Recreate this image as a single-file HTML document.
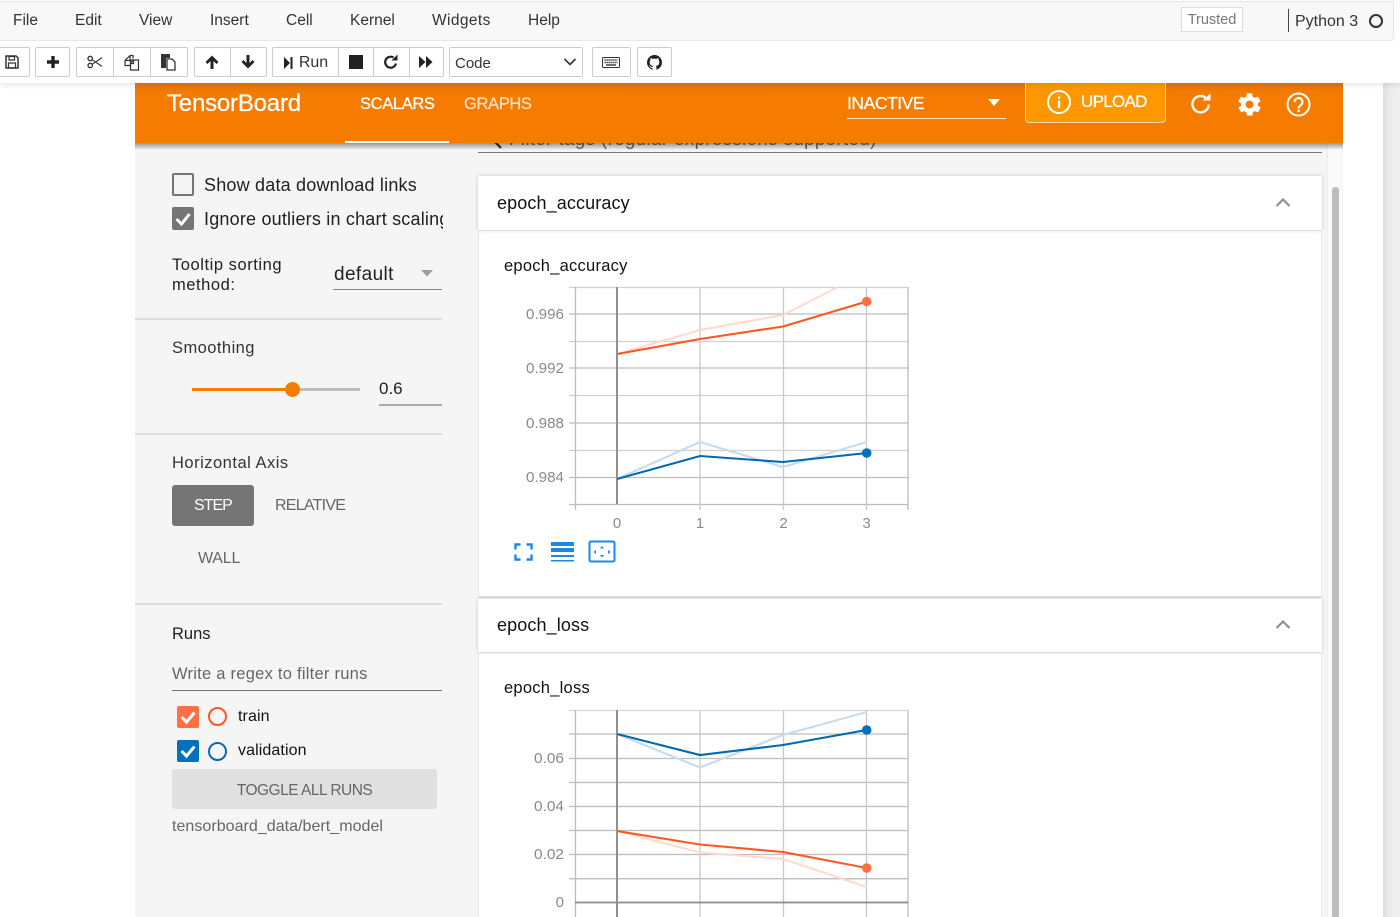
<!DOCTYPE html>
<html><head><meta charset="utf-8"><title>TensorBoard</title>
<style>
html,body{margin:0;padding:0;width:1400px;height:917px;overflow:hidden;background:#fff}
body{position:relative;font-family:"Liberation Sans",sans-serif;color:#212121}
#w{position:absolute;left:0;top:0;width:1400px;height:917px;overflow:hidden;filter:blur(.3px)}
.a{position:absolute;white-space:nowrap}
.m{top:12px;font-size:15.5px;line-height:18px;color:#333}
.b{position:absolute;top:47px;height:28px;background:#fff;border:1px solid #ccc;border-radius:2px;box-sizing:content-box;display:flex}
.b>div{height:28px;border-right:1px solid #ccc;display:flex;align-items:center;justify-content:center;box-sizing:content-box}
.b>div:last-child{border-right:0}
.s{font-size:16.5px;line-height:20px;color:#212121}
.g{color:#666}
.hr{position:absolute;left:135px;width:307px;height:1px;background:#ddd}
.panel{position:absolute;left:478px;width:844px;background:#fff;box-shadow:0 0 4px rgba(0,0,0,.18)}
.o{-webkit-text-stroke:.25px currentColor}
svg{display:block}
</style></head><body><div id="w">

<!-- right gutter -->
<div class="a" style="left:1383px;top:83px;width:17px;height:834px;background:linear-gradient(90deg,#dedede,#ececec 40%,#f0f0f0)"></div>

<!-- content bg -->
<div class="a" style="left:135px;top:83px;width:1208px;height:834px;background:#f5f5f5"></div>
<div class="a" style="left:1327px;top:143px;width:15px;height:774px;background:#fafafa;border-left:1px solid #eee;box-sizing:border-box"></div>
<div class="a" style="left:1332px;top:187px;width:7px;height:730px;background:#bdbdbd;border-radius:3px 3px 0 0"></div>

<!-- filter -->
<svg class="a" style="left:492px;top:138px" width="14" height="12"><path d="M3 4l6 6" stroke="#333" stroke-width="2.200"/></svg>
<div class="a g" style="left:509px;top:129px;font-size:18.5px;line-height:20px;letter-spacing:.47px">Filter tags (regular expressions supported)</div>
<div class="a" style="left:478px;top:152px;width:844px;height:1px;background:#777"></div>

<!-- orange header -->
<div class="a" style="left:135px;top:143px;width:1208px;height:7px;background:linear-gradient(rgba(0,0,0,.4),rgba(0,0,0,0))"></div>
<div class="a" style="left:135px;top:83px;width:1208px;height:60px;background:#f57c00"></div>
<div class="a" style="left:135px;top:83px;width:1208px;height:10px;background:linear-gradient(#e57310,#f57c00)"></div>
<div class="a o" style="left:167px;top:89px;font-size:24px;line-height:30px;color:#fff;letter-spacing:-.2px">TensorBoard</div>
<div class="a o" style="left:360px;top:95px;font-size:16.5px;line-height:18px;color:#fff;letter-spacing:-.35px">SCALARS</div>
<div class="a" style="left:345px;top:141px;width:104px;height:2px;background:#fff"></div>
<div class="a o" style="left:464px;top:95px;font-size:16.5px;line-height:18px;color:#fde0c2;letter-spacing:-.35px">GRAPHS</div>
<div class="a o" style="left:847px;top:93px;font-size:17.5px;line-height:20px;color:#fff;letter-spacing:-.45px">INACTIVE</div>
<div class="a" style="left:847px;top:118px;width:159px;height:1px;background:#ffe3c4"></div>
<svg class="a" style="left:987px;top:98px" width="14" height="9"><path d="M1 1h12L7 8z" fill="#fff"/></svg>
<div class="a" style="left:1025px;top:83px;width:141px;height:40px;box-sizing:border-box;background:#ff9800;border:1px solid #ffd9a8;border-top:0;border-radius:0 0 4px 4px"></div>
<svg class="a" style="left:1046px;top:89px" width="26" height="26" viewBox="0 0 26 26"><circle cx="13" cy="13" r="11" fill="none" stroke="#fff" stroke-width="2"/><rect x="12" y="11.5" width="2.2" height="7.5" fill="#fff"/><rect x="12" y="7.5" width="2.2" height="2.2" fill="#fff"/></svg>
<div class="a o" style="left:1081px;top:92px;font-size:17px;line-height:20px;color:#fff;letter-spacing:-.7px">UPLOAD</div>
<svg class="a" style="left:1187px;top:90px" width="28" height="28" viewBox="0 0 28 28"><path d="M21.8 14.5A8.2 8.2 0 1 1 18.5 7.6" fill="none" stroke="#fff" stroke-width="2.4"/><path d="M15.5 10.5h8v-7z" fill="#fff"/></svg>
<svg class="a" style="left:1236px;top:91px" width="27" height="27" viewBox="0 0 24 24"><path fill="#fff" d="M19.4 13a7.5 7.5 0 0 0 0-2l2.1-1.6a.5.5 0 0 0 .1-.6l-2-3.5a.5.5 0 0 0-.6-.2l-2.5 1a7.3 7.3 0 0 0-1.7-1l-.4-2.6a.5.5 0 0 0-.5-.4h-4a.5.5 0 0 0-.5.4l-.4 2.6a7.3 7.3 0 0 0-1.7 1l-2.5-1a.5.5 0 0 0-.6.2l-2 3.5a.5.5 0 0 0 .1.6L4.6 11a7.5 7.5 0 0 0 0 2l-2.1 1.6a.5.5 0 0 0-.1.6l2 3.5c.1.2.4.3.6.2l2.5-1c.5.4 1.1.7 1.7 1l.4 2.6c0 .2.2.4.5.4h4c.3 0 .5-.2.5-.4l.4-2.6a7.3 7.3 0 0 0 1.7-1l2.5 1c.2.1.5 0 .6-.2l2-3.5a.5.5 0 0 0-.1-.6zM12 15.5a3.5 3.5 0 1 1 0-7 3.5 3.5 0 0 1 0 7z"/></svg>
<svg class="a" style="left:1285px;top:91px" width="27" height="27" viewBox="0 0 27 27"><circle cx="13.5" cy="13.5" r="11" fill="none" stroke="#fff" stroke-width="2"/><path d="M9.6 11a3.9 3.9 0 1 1 6.3 3c-1.5 1.2-2.4 1.8-2.4 3.6" fill="none" stroke="#fff" stroke-width="2.2"/><rect x="12.4" y="18.8" width="2.2" height="2.2" fill="#fff"/></svg>

<!-- sidebar -->
<div class="a" style="left:172px;top:173px;width:22px;height:23px;box-sizing:border-box;border:2px solid #757575;border-radius:2px"></div>
<div class="a" style="left:204px;top:175px;font-size:18px;line-height:20px;letter-spacing:.2px">Show data download links</div>
<div class="a" style="left:172px;top:207px;width:22px;height:23px;background:#757575;border-radius:2px"></div>
<svg class="a" style="left:172px;top:207px" width="22" height="23"><path d="M4.500 12l5 5 8-10" fill="none" stroke="#fff" stroke-width="3"/></svg>
<div class="a" style="left:204px;top:209px;width:239px;overflow:hidden;font-size:18px;line-height:20px;letter-spacing:.2px">Ignore outliers in chart scaling</div>
<div class="a" style="left:172px;top:255px;font-size:16.5px;line-height:20px;letter-spacing:.55px">Tooltip sorting<br>method:</div>
<div class="a" style="left:334px;top:264px;font-size:19px;line-height:22px;letter-spacing:.4px">default</div>
<svg class="a" style="left:421px;top:270px" width="13" height="8"><path d="M0 0h12L6 6.500z" fill="#9e9e9e"/></svg>
<div class="a" style="left:333px;top:289px;width:109px;height:1px;background:#888"></div>
<div class="hr" style="top:318px;height:2px"></div>
<div class="a s" style="left:172px;top:338px;letter-spacing:.45px;color:#333">Smoothing</div>
<div class="a" style="left:192px;top:388px;width:100px;height:3px;background:#f57c00"></div>
<div class="a" style="left:292px;top:388px;width:68px;height:3px;background:#bdbdbd"></div>
<div class="a" style="left:285px;top:382px;width:15px;height:15px;border-radius:50%;background:#f57c00"></div>
<div class="a" style="left:379px;top:379px;font-size:17px;line-height:20px">0.6</div>
<div class="a" style="left:379px;top:404px;width:63px;height:2px;background:#aaa"></div>
<div class="hr" style="top:433px;height:2px"></div>
<div class="a s" style="left:172px;top:453px;letter-spacing:.5px;color:#333">Horizontal Axis</div>
<div class="a" style="left:172px;top:485px;width:82px;height:41px;background:#757575;border-radius:3px"></div>
<div class="a" style="left:194px;top:496px;font-size:16px;line-height:19px;color:#fff;letter-spacing:-1px">STEP</div>
<div class="a g" style="left:275px;top:496px;font-size:16px;line-height:19px;letter-spacing:-.75px">RELATIVE</div>
<div class="a g" style="left:198px;top:549px;font-size:16px;line-height:19px;letter-spacing:-.2px">WALL</div>
<div class="hr" style="top:603px;height:2px"></div>
<div class="a s" style="left:172px;top:624px;letter-spacing:0">Runs</div>
<div class="a g" style="left:172px;top:664px;font-size:16.5px;line-height:20px;letter-spacing:.25px">Write a regex to filter runs</div>
<div class="a" style="left:172px;top:690px;width:270px;height:1px;background:#757575"></div>
<div class="a" style="left:177px;top:706px;width:22px;height:22px;background:#ff7043;border-radius:2px"></div>
<svg class="a" style="left:177px;top:706px" width="22" height="22"><path d="M4.500 11l5 5 8-9.500" fill="none" stroke="#fff" stroke-width="3"/></svg>
<div class="a" style="left:208px;top:707px;width:19px;height:19px;box-sizing:border-box;border:2px solid #ff5722;border-radius:50%"></div>
<div class="a" style="left:238px;top:707px;font-size:16px;line-height:20px;color:#111;letter-spacing:.1px">train</div>
<div class="a" style="left:177px;top:740px;width:22px;height:22px;background:#0072bb;border-radius:2px"></div>
<svg class="a" style="left:177px;top:740px" width="22" height="22"><path d="M4.500 11l5 5 8-9.500" fill="none" stroke="#fff" stroke-width="3"/></svg>
<div class="a" style="left:208px;top:742px;width:19px;height:19px;box-sizing:border-box;border:2px solid #0c68b5;border-radius:50%"></div>
<div class="a" style="left:238px;top:741px;font-size:16px;line-height:20px;color:#111;letter-spacing:.1px">validation</div>
<div class="a" style="left:172px;top:769px;width:265px;height:40px;background:#e0e0e0;border-radius:3px"></div>
<div class="a g" style="left:172px;top:781px;width:265px;text-align:center;font-size:15.5px;line-height:19px;letter-spacing:-.5px">TOGGLE ALL RUNS</div>
<div class="a g" style="left:172px;top:817px;font-size:16px;line-height:20px;letter-spacing:.04px">tensorboard_data/bert_model</div>

<!-- panel 1 -->
<div class="panel" style="top:176px;height:54px;z-index:1"></div>
<div class="a" style="left:478px;top:230px;width:844px;height:1px;background:#ddd;z-index:1"></div>
<div class="a" style="left:497px;top:192px;font-size:18px;line-height:22px;color:#111;z-index:2;letter-spacing:.12px">epoch_accuracy</div>
<svg class="a" style="left:1275px;top:197px;z-index:2" width="16" height="11"><path d="M1.500 9L8 2.500 14.500 9" fill="none" stroke="#8f8f8f" stroke-width="2.200"/></svg>
<div class="a" style="left:478px;top:231px;width:844px;height:367px;box-sizing:border-box;background:#fff;border:1px solid #e8e8e8;border-width:0 1px 2px;border-bottom-color:#e0e0e0"></div>
<div class="a" style="left:504px;top:256px;font-size:16.5px;line-height:20px;color:#111;letter-spacing:.25px">epoch_accuracy</div>

<svg class="a" style="left:500px;top:280px" width="420" height="255" viewBox="500 280 420 255">
<g stroke="#d0d0d0" stroke-width="1.200" fill="none">
<path d="M569 287.500H908M569 341.500H908M569 395.500H908M569 450.500H908"/>
</g>
<g stroke="#bdbdbd" stroke-width="1.300" fill="none">
<path d="M569 314H908M569 368H908M569 423H908M569 477.500H908M569 504.500H908"/>
<path d="M575.500 287V510M908 287V510"/>
</g>
<path d="M700 287V510M783.500 287V510M866.500 287V510" stroke="#c8c8c8" stroke-width="1.300"/>
<path d="M617 287V504" stroke="#909090" stroke-width="2"/>
<g fill="none" stroke-width="2.100">
<path d="M617 354L700 330L783 315L838 287" stroke="#ffdacf"/>
<path d="M617 479L700 442L783 467L866.700 442" stroke="#c5dcef"/>
<path d="M617 354L700 339L783 326.500L866.700 301.500" stroke="#ff5722"/>
<path d="M617 479L700 456L783 462L866.700 453" stroke="#0068b3"/>
</g>
<circle cx="866.700" cy="301.500" r="4.800" fill="#ff7043"/>
<circle cx="866.700" cy="453" r="4.800" fill="#0072bb"/>
<g font-family="Liberation Sans, sans-serif" font-size="15" fill="#8a8a8a">
<text x="564" y="319" text-anchor="end" textLength="38" lengthAdjust="spacingAndGlyphs">0.996</text>
<text x="564" y="373" text-anchor="end" textLength="38" lengthAdjust="spacingAndGlyphs">0.992</text>
<text x="564" y="428" text-anchor="end" textLength="38" lengthAdjust="spacingAndGlyphs">0.988</text>
<text x="564" y="482" text-anchor="end" textLength="38" lengthAdjust="spacingAndGlyphs">0.984</text>
<text x="617" y="528" text-anchor="middle">0</text>
<text x="700" y="528" text-anchor="middle">1</text>
<text x="783.500" y="528" text-anchor="middle">2</text>
<text x="866.500" y="528" text-anchor="middle">3</text>
</g>
</svg>

<svg class="a" style="left:510px;top:536px" width="110" height="30" viewBox="510 536 110 30">
<path d="M515.500 549.500V544.500H520.500M526.500 544.500H531.500V549.500M531.500 554.500V559.500H526.500M520.500 559.500H515.500V554.500" fill="none" stroke="#1e88e5" stroke-width="2.400"/>
<rect x="551" y="542" width="23" height="4" fill="#1e88e5"/>
<rect x="551" y="548" width="23" height="4" fill="#1e88e5"/>
<rect x="551" y="555" width="23" height="2" fill="#1e88e5"/>
<rect x="551" y="560" width="23" height="1.500" fill="#1e88e5"/>
<rect x="589.500" y="541.500" width="25" height="20" rx="1.500" fill="none" stroke="#1e88e5" stroke-width="2"/>
<path d="M602 546l2 2.500h-4zM602 557.500l2-2.500h-4zM593.500 552l2.500-2v4zM610.500 552l-2.500-2v4z" fill="#1e88e5"/>
</svg>

<!-- panel 2 -->
<div class="panel" style="top:599px;height:53px;z-index:1"></div>
<div class="a" style="left:478px;top:652px;width:844px;height:1px;background:#ddd;z-index:1"></div>
<div class="a" style="left:497px;top:614px;font-size:18px;line-height:22px;color:#111;z-index:2;letter-spacing:.12px">epoch_loss</div>
<svg class="a" style="left:1275px;top:619px;z-index:2" width="16" height="11"><path d="M1.500 9L8 2.500 14.500 9" fill="none" stroke="#8f8f8f" stroke-width="2.200"/></svg>
<div class="a" style="left:478px;top:653px;width:844px;height:264px;box-sizing:border-box;background:#fff;border:1px solid #e8e8e8;border-width:0 1px"></div>
<div class="a" style="left:504px;top:678px;font-size:16.500px;line-height:20px;color:#111;letter-spacing:.25px">epoch_loss</div>

<svg class="a" style="left:500px;top:700px" width="420" height="217" viewBox="500 700 420 217">
<path d="M569 710.500H908" stroke="#d8d8d8" stroke-width="1.200"/>
<g stroke="#bdbdbd" stroke-width="1.300" fill="none">
<path d="M569 734H908M569 758.500H908M569 782.500H908M569 806.500H908M569 830.500H908M569 854.500H908M569 878.700H908"/>
<path d="M575.500 710V917M908 710V917"/>
</g>
<path d="M700 710V917M783.500 710V917M866.500 710V917" stroke="#c8c8c8" stroke-width="1.300"/>
<path d="M575 902.500H908" stroke="#8a8a8a" stroke-width="1.800"/>
<path d="M617 710V917" stroke="#909090" stroke-width="2"/>
<g fill="none" stroke-width="2.100">
<path d="M617 734L700 767.500L783 735L866.700 712" stroke="#c5dcef"/>
<path d="M617 831L700 852.500L783 859L866.700 887" stroke="#ffdacf"/>
<path d="M617 734L700 755L783 745L866.700 730" stroke="#0068b3"/>
<path d="M617 831L700 844.500L783 852L866.700 868" stroke="#ff5722"/>
</g>
<circle cx="866.700" cy="730" r="4.800" fill="#0072bb"/>
<circle cx="866.700" cy="868" r="4.800" fill="#ff7043"/>
<g font-family="Liberation Sans, sans-serif" font-size="15" fill="#8a8a8a">
<text x="564" y="763" text-anchor="end" textLength="30" lengthAdjust="spacingAndGlyphs">0.06</text>
<text x="564" y="811" text-anchor="end" textLength="30" lengthAdjust="spacingAndGlyphs">0.04</text>
<text x="564" y="859" text-anchor="end" textLength="30" lengthAdjust="spacingAndGlyphs">0.02</text>
<text x="564" y="907" text-anchor="end">0</text>
</g>
</svg>

<!-- notebook top -->
<div class="a" style="left:0;top:0;width:1400px;height:83px;background:#fff;box-shadow:0 2px 6px rgba(0,0,0,.1);z-index:5"></div>
<div class="a" style="left:0;top:1px;width:1394px;height:40px;box-sizing:border-box;background:#f8f8f8;border:1px solid #e7e7e7;border-left:0;border-radius:0 0 3px 0;z-index:6"></div>
<div style="position:absolute;left:0;top:0;z-index:7;width:1400px;height:83px">
<div class="a m" style="left:13px">File</div>
<div class="a m" style="left:75px">Edit</div>
<div class="a m" style="left:139px">View</div>
<div class="a m" style="left:210px">Insert</div>
<div class="a m" style="left:286px">Cell</div>
<div class="a m" style="left:350px">Kernel</div>
<div class="a m" style="left:432px;letter-spacing:.4px">Widgets</div>
<div class="a m" style="left:528px">Help</div>
<div class="a" style="left:1181px;top:7px;width:62px;height:25px;box-sizing:border-box;border:1px solid #ddd;background:#fff;text-align:center;font-size:14.5px;line-height:24px;color:#777">Trusted</div>
<div class="a" style="left:1288px;top:9px;width:1px;height:23px;background:#444"></div>
<div class="a" style="left:1295px;top:13px;font-size:16px;line-height:18px;color:#333">Python 3</div>
<div class="a" style="left:1369px;top:14px;width:14px;height:14px;box-sizing:border-box;border:2px solid #333;border-radius:50%"></div>

<div class="b" style="left:-2px;width:30px"><div style="width:30px;justify-content:flex-start;padding-left:5px;box-sizing:border-box"><svg width="16" height="16" viewBox="0 0 16 16"><path d="M2 2h10l2 2v10H2z" fill="none" stroke="#333" stroke-width="1.500"/><path d="M5 2.500h5.500V6H5zM4.500 9h7v5h-7z" fill="none" stroke="#333" stroke-width="1.200"/></svg></div></div>
<div class="b" style="left:35px;width:33px"><div style="width:33px"><svg width="14" height="14" viewBox="0 0 14 14"><path d="M7 1v12M1 7h12" stroke="#222" stroke-width="3.400"/></svg></div></div>
<div class="b" style="left:76px;width:110px">
<div style="width:36px"><svg width="16" height="14" viewBox="0 0 18 16"><circle cx="3.500" cy="4" r="2.500" fill="none" stroke="#333" stroke-width="1.500"/><circle cx="3.500" cy="12" r="2.500" fill="none" stroke="#333" stroke-width="1.500"/><path d="M5.500 5.200L17 13M5.500 10.800L17 3" stroke="#333" stroke-width="1.300"/></svg></div>
<div style="width:36px"><svg width="17" height="17" viewBox="0 0 17 17" style="margin-left:-1px"><path d="M7 1.500L2 6.500v5h5M7 1.500h3v3M7 1.500v5H2" fill="none" stroke="#333" stroke-width="1.200"/><path d="M7.500 6h8v10h-8zM10 6l-2.500 3.500h3V6" fill="none" stroke="#333" stroke-width="1.200"/></svg></div>
<div style="width:36px"><svg width="17" height="18" viewBox="0 0 17 18" style="margin-left:-3px"><path d="M2 1h9v4H7v10H2z" fill="#333"/><path d="M8 6h5l3 3v8H8z" fill="#fff" stroke="#333" stroke-width="1.300"/></svg></div>
</div>
<div class="b" style="left:194px;width:71px">
<div style="width:35px"><svg width="16" height="16" viewBox="0 0 16 16" style="margin-left:-1px"><path d="M8 1.500L14.500 8l-2 2L9.500 7v8h-3V7l-3 3-2-2z" fill="#222"/></svg></div>
<div style="width:35px"><svg width="16" height="16" viewBox="0 0 16 16" style="margin-left:-1px"><path d="M8 14.500L1.500 8l2-2 3 3V1h3v8l3-3 2 2z" fill="#222"/></svg></div>
</div>
<div class="b" style="left:272px;width:170px">
<div style="width:65px;font-size:16px;color:#333;padding-top:1px;box-sizing:content-box;height:27px"><svg width="11" height="14" viewBox="0 0 11 14" style="margin-right:5px"><path d="M1 1l6 6-6 6z" fill="#222"/><rect x="7.500" y="1" width="2" height="12" fill="#222"/></svg>Run</div>
<div style="width:34px"><svg width="14" height="14"><rect width="14" height="14" fill="#222"/></svg></div>
<div style="width:35px"><svg width="16" height="16" viewBox="0 0 16 16" style="margin-left:-2px"><path d="M13 9.500A5.500 5.500 0 1 1 10.500 3.500" fill="none" stroke="#222" stroke-width="2.200"/><path d="M8.500 6.500h6v-6z" fill="#222"/></svg></div>
<div style="width:33px"><svg width="15" height="14" viewBox="0 0 15 14" style="margin-left:-3px"><path d="M1 1l6.500 6L1 13zM8 1l6.500 6L8 13z" fill="#222"/></svg></div>
</div>
<div class="b" style="left:449px;width:132px;font-size:15px;color:#333"><div style="width:132px;justify-content:flex-start;padding-left:5px;box-sizing:border-box;padding-top:2px">Code</div></div>
<svg class="a" style="left:563px;top:57px" width="14" height="10"><path d="M1.500 2L7 7.500 12.500 2" fill="none" stroke="#333" stroke-width="1.600"/></svg>
<div class="b" style="left:592px;width:37px"><div style="width:37px"><svg width="18" height="11" viewBox="0 0 18 11" style="margin-left:-2px"><rect x=".5" y=".5" width="17" height="10" rx="1" fill="none" stroke="#333"/><path d="M2.500 3h13M2.500 5.500h13" stroke="#333" stroke-width="1.400" stroke-dasharray="1.300 .7"/><path d="M4 8h10" stroke="#333" stroke-width="1.400"/></svg></div></div>
<div class="b" style="left:637px;width:33px"><div style="width:33px"><svg width="15" height="15" viewBox="0 0 16 16"><path fill="#222" d="M8 0C3.580 0 0 3.580 0 8c0 3.540 2.290 6.530 5.470 7.590.4.070.55-.17.55-.38v-1.340c-2.230.48-2.690-1.080-2.690-1.080-.36-.92-.89-1.170-.89-1.170-.73-.5.050-.49.050-.49.800.06 1.230.83 1.230.83.720 1.220 1.870.87 2.330.66.070-.52.280-.87.510-1.070-1.780-.2-3.640-.89-3.640-3.950 0-.87.310-1.590.82-2.150-.08-.2-.36-1.020.08-2.120 0 0 .67-.21 2.200.82a7.600 7.600 0 0 1 4 0c1.530-1.040 2.200-.82 2.200-.82.440 1.100.16 1.920.08 2.120.51.560.82 1.270.82 2.150 0 3.070-1.870 3.750-3.650 3.950.29.250.54.730.54 1.480v2.200c0 .21.150.46.550.38A8 8 0 0 0 16 8c0-4.420-3.580-8-8-8z"/></svg></div></div>
</div>
</div></body></html>
